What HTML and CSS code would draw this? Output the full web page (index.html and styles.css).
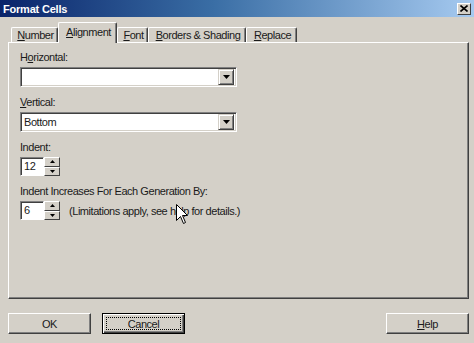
FILE: index.html
```html
<!DOCTYPE html>
<html>
<head>
<meta charset="utf-8">
<link rel="stylesheet" href="styles.css">
</head>
<body>
<div class="window">
  <div class="titlebar">
    <span class="title">Format Cells</span>
    <span class="close"><svg width="8" height="7" viewBox="0 0 8 7"><path d="M0.5 0.5 L7.5 6.5 M7.5 0.5 L0.5 6.5" stroke="#000" stroke-width="1.6"/></svg></span>
  </div>
  <div class="body">
    <div class="tabs">
      <div class="tab w-number"><span><u>N</u>umber</span></div>
      <div class="tab sel w-align"><span><u>A</u>lignment</span></div>
      <div class="tab w-font"><span><u>F</u>ont</span></div>
      <div class="tab w-borders"><span><u>B</u>orders &amp; Shading</span></div>
      <div class="tab w-replace"><span><u>R</u>eplace</span></div>
    </div>
    <div class="panel">
      <div class="label">H<u>o</u>rizontal:</div>
      <div class="combo">
        <span class="combo-text"></span>
        <span class="drop"><svg width="7" height="4" viewBox="0 0 7 4"><polygon points="0,0 7,0 3.5,4" fill="#000"/></svg></span>
      </div>
      <div class="label gap"><u>V</u>ertical:</div>
      <div class="combo">
        <span class="combo-text">Bottom</span>
        <span class="drop"><svg width="7" height="4" viewBox="0 0 7 4"><polygon points="0,0 7,0 3.5,4" fill="#000"/></svg></span>
      </div>
      <div class="label gap">Indent:</div>
      <div class="spinrow">
        <span class="spinbox">12</span>
        <span class="spin">
          <span class="sbtn"><svg width="5" height="3" viewBox="0 0 5 3"><polygon points="0,3 5,3 2.5,0" fill="#000"/></svg></span>
          <span class="sbtn"><svg width="5" height="3" viewBox="0 0 5 3"><polygon points="0,0 5,0 2.5,3" fill="#000"/></svg></span>
        </span>
      </div>
      <div class="label gap">Indent Increases For Each Generation By:</div>
      <div class="spinrow">
        <span class="spinbox">6</span>
        <span class="spin">
          <span class="sbtn"><svg width="5" height="3" viewBox="0 0 5 3"><polygon points="0,3 5,3 2.5,0" fill="#000"/></svg></span>
          <span class="sbtn"><svg width="5" height="3" viewBox="0 0 5 3"><polygon points="0,0 5,0 2.5,3" fill="#000"/></svg></span>
        </span>
        <span class="note">(Limitations apply, see help for details.)</span>
      </div>
      <svg class="cursor" width="13" height="21" viewBox="0 0 13 21"><path d="M0.5 0.5 L0.5 16.5 L4.5 12.5 L7.5 19.5 L9.5 18.5 L6.5 11.5 L11.5 11.5 Z" fill="#fff" stroke="#000" stroke-width="1"/></svg>
    </div>
    <div class="buttons">
      <div class="btn">OK</div>
      <div class="btn def"><span class="focus">Cancel</span></div>
      <div class="spacer"></div>
      <div class="btn"><span><u>H</u>elp</span></div>
    </div>
  </div>
</div>
</body>
</html>
```
FILE: styles.css
```css
html, body {
  margin: 0;
  padding: 0;
}
body {
  width: 474px;
  height: 343px;
  overflow: hidden;
  background: #d4d0c8;
  font-family: "Liberation Sans", Arial, sans-serif;
  font-size: 11px;
  color: #1a1a1a;
  letter-spacing: -0.45px;
}
.window {
  display: flex;
  flex-direction: column;
  height: 343px;
}
.titlebar {
  height: 17px;
  display: flex;
  align-items: center;
  justify-content: space-between;
  padding: 0 3px 0 3px;
  background: linear-gradient(to right, #0a246a 0%, #3a6ea5 45%, #a6caf0 100%);
}
.title {
  color: #fff;
  font-weight: bold;
  font-size: 11px;
  letter-spacing: -0.2px;
}
.close {
  width: 14px;
  height: 12px;
  box-sizing: border-box;
  background: #d4d0c8;
  border-top: 1px solid #fff;
  border-left: 1px solid #fff;
  border-right: 1px solid #404040;
  border-bottom: 1px solid #404040;
  display: flex;
  align-items: center;
  justify-content: center;
}
.body {
  padding: 5px 5px 0 8px;
}
.tabs {
  display: flex;
  align-items: flex-end;
  height: 21px;
  padding-left: 3px;
  margin-bottom: -1px;
}
.tab {
  box-sizing: border-box;
  height: 16px;
  border-top: 1px solid #fff;
  border-left: 1px solid #fff;
  border-right: 1px solid #404040;
  box-shadow: inset -1px 0 0 #808080;
  border-top-left-radius: 2px;
  border-top-right-radius: 2px;
  display: flex;
  justify-content: center;
  padding-top: 1px;
  padding-left: 2px;
  line-height: 13px;
  background: #d4d0c8;
}
.tab.sel {
  height: 21px;
  padding-top: 3px;
  position: relative;
  z-index: 1;
}
.w-number { width: 47px; }
.w-align { width: 59px; }
.w-font { width: 31px; }
.w-borders { width: 98px; }
.w-replace { width: 51px; }
.panel {
  position: relative;
  box-sizing: border-box;
  height: 257px;
  border-top: 1px solid #fff;
  border-left: 1px solid #fff;
  border-right: 1px solid #404040;
  border-bottom: 1px solid #404040;
  box-shadow: inset -1px -1px 0 #808080;
  padding: 8px 0 0 11px;
}
.label {
  line-height: 13px;
  height: 13px;
  margin-bottom: 3px;
}
.label.gap {
  margin-top: 9px;
}
.combo {
  box-sizing: border-box;
  width: 217px;
  height: 20px;
  background: #fff;
  border-top: 1px solid #808080;
  border-left: 1px solid #808080;
  border-right: 1px solid #fff;
  border-bottom: 1px solid #fff;
  box-shadow: inset 1px 1px 0 #404040, inset -1px -1px 0 #d4d0c8;
  display: flex;
  align-items: center;
  padding: 2px 2px 2px 3px;
}
.combo-text {
  flex: 1;
}
.drop {
  box-sizing: border-box;
  width: 16px;
  height: 16px;
  background: #d4d0c8;
  border-top: 1px solid #d4d0c8;
  border-left: 1px solid #d4d0c8;
  border-right: 1px solid #404040;
  border-bottom: 1px solid #404040;
  box-shadow: inset 1px 1px 0 #fff, inset -1px -1px 0 #808080;
  display: flex;
  align-items: center;
  justify-content: center;
}
.spinrow {
  display: flex;
  align-items: center;
  height: 19px;
}
.spinbox {
  box-sizing: border-box;
  width: 24px;
  height: 19px;
  background: #fff;
  border-top: 1px solid #808080;
  border-left: 1px solid #808080;
  border-right: 1px solid #fff;
  border-bottom: 1px solid #fff;
  box-shadow: inset 1px 1px 0 #404040;
  padding: 2px 0 0 3px;
  line-height: 13px;
}
.spin {
  display: flex;
  flex-direction: column;
  width: 16px;
  height: 19px;
}
.sbtn {
  box-sizing: border-box;
  flex: 1;
  background: #d4d0c8;
  border-top: 1px solid #fff;
  border-left: 1px solid #fff;
  border-right: 1px solid #404040;
  border-bottom: 1px solid #404040;
  display: flex;
  align-items: center;
  justify-content: center;
}
.note {
  margin-left: 9px;
}
.cursor {
  position: absolute;
  left: 167px;
  top: 161px;
}
.buttons {
  display: flex;
  margin-top: 14px;
  height: 21px;
}
.spacer {
  flex: 1;
}
.btn {
  box-sizing: border-box;
  width: 83px;
  height: 21px;
  border-top: 1px solid #fff;
  border-left: 1px solid #fff;
  border-right: 1px solid #404040;
  border-bottom: 1px solid #404040;
  box-shadow: inset -1px -1px 0 #808080;
  display: flex;
  align-items: center;
  justify-content: center;
}
.btn.def {
  margin-left: 11px;
  border: 1px solid #000;
  box-shadow: inset 1px 1px 0 #fff, inset -1px -1px 0 #404040, inset -2px -2px 0 #808080;
  padding: 3px;
}
.focus {
  flex: 1;
  align-self: stretch;
  border: 1px dotted #000;
  display: flex;
  align-items: center;
  justify-content: center;
}
```
